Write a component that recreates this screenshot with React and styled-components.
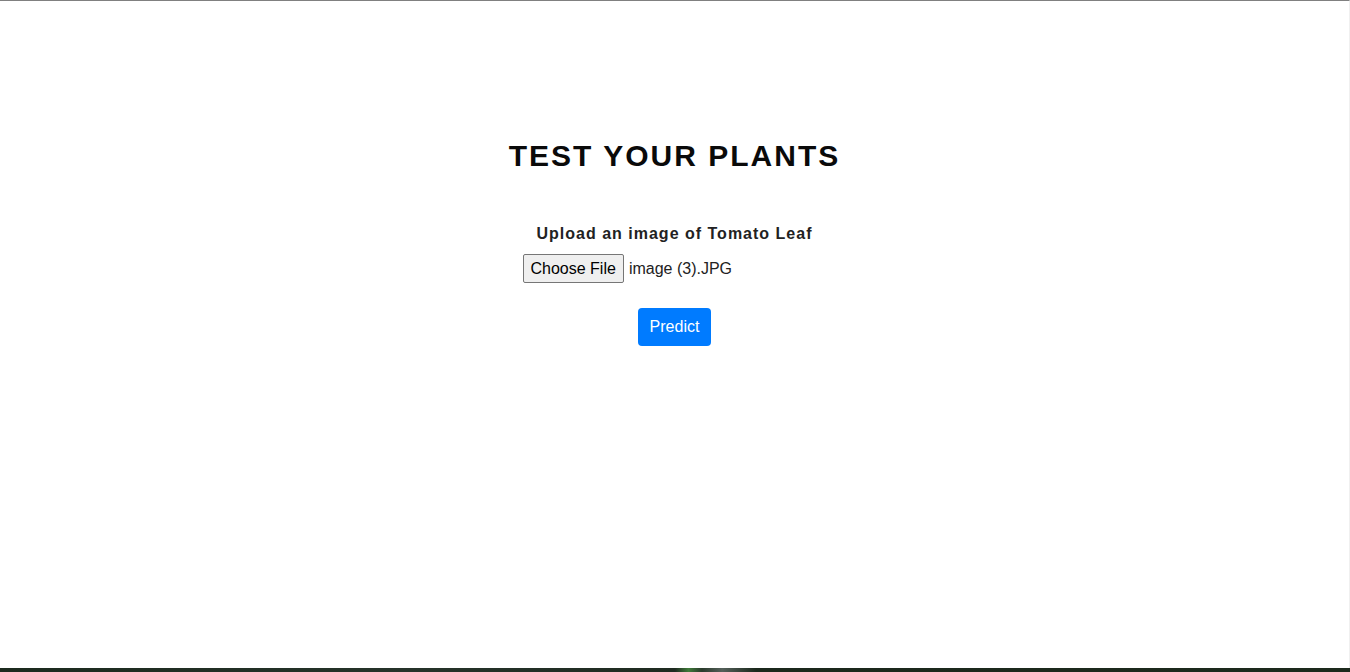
import React from "react";
import styled, { createGlobalStyle } from "styled-components";

const GlobalStyle = createGlobalStyle`
  html, body {
    margin: 0;
    padding: 0;
    background: #fff;
    font-family: "Liberation Sans", Arial, sans-serif;
  }
`;

const Page = styled.div`
  display: flex;
  flex-direction: column;
  height: 672px;
  overflow: hidden;
`;

const Main = styled.main`
  flex: 1;
  display: flex;
  flex-direction: column;
  align-items: center;
  border-top: 1px solid #808080;
  border-right: 1px solid #f0f0f0;
  padding-top: 137px;
`;

const Footer = styled.div`
  height: 4px;
  background: linear-gradient(90deg, #1c2a1e 0%, #26332a 30%, #1f2b21 50%, #3f7a3a 51%, #2a3a2c 52%, #55605a 53.5%, #1b281c 56%, #1d2a1d 100%);
`;

const Title = styled.h1`
  margin: 0;
  font-size: 30px;
  line-height: 36px;
  font-weight: 700;
  letter-spacing: 2px;
  color: #0a0a0a;
`;

const Label = styled.p`
  margin: 50px 0 0;
  font-size: 16px;
  line-height: 20px;
  font-weight: 700;
  letter-spacing: 1px;
  color: #222;
`;

const FileRow = styled.div`
  display: flex;
  align-items: center;
  width: 304px;
  margin-top: 10px;
`;

const ChooseButton = styled.label`
  box-sizing: border-box;
  height: 29px;
  padding: 0 7px;
  display: flex;
  align-items: center;
  background: #efefef;
  border: 1px solid #767676;
  border-radius: 2px;
  font-size: 16px;
  color: #000;
  cursor: pointer;
`;

const FileName = styled.span`
  margin-left: 5px;
  font-size: 16px;
  color: #222;
`;

const PredictButton = styled.button`
  margin-top: 25px;
  height: 38px;
  padding: 0 12px;
  background: #007bff;
  color: #fff;
  border: none;
  border-radius: 4px;
  font-family: inherit;
  font-size: 16px;
  cursor: pointer;
`;

export default function App() {
  return (
    <Page>
      <GlobalStyle />
      <Main>
        <Title>TEST YOUR PLANTS</Title>
        <Label>Upload an image of Tomato Leaf</Label>
        <FileRow>
          <ChooseButton>Choose File</ChooseButton>
          <FileName>image (3).JPG</FileName>
        </FileRow>
        <PredictButton>Predict</PredictButton>
      </Main>
      <Footer />
    </Page>
  );
}
